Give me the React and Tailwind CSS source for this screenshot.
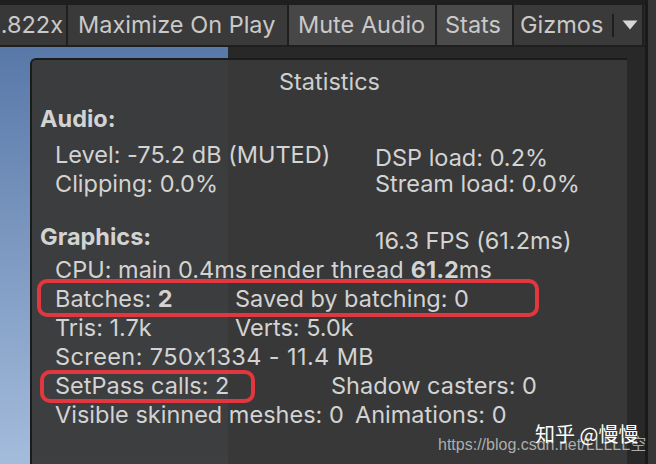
export default function App() {
  const btn = "flex items-center text-[23.5px] text-[#c9c9c9] whitespace-nowrap overflow-hidden";
  return (
    <div className="w-[656px] h-[464px] overflow-hidden flex bg-[#2a2a2a] font-['Inter',sans-serif] [font-feature-settings:'calt'_0] relative">
      <div className="w-[645px] shrink-0 flex flex-col">
        {/* toolbar */}
        <div className="h-[47px] shrink-0 flex gap-[2px] bg-[#1f1f1f] pt-[5px] pb-[2px]">
          <div className={`${btn} w-[66px] justify-end pr-[3px] bg-[#383838]`}>.822x</div>
          <div className={`${btn} w-[219px] pl-[10px] bg-[#3a3a3a]`}>Maximize On Play</div>
          <div className={`${btn} w-[146px] pl-[9px] bg-[#474747]`}>Mute Audio</div>
          <div className={`${btn} w-[75px] pl-[8px] bg-[#4b4b4b]`}>Stats</div>
          <div className={`${btn} w-[128px] pl-[6px] bg-[#3a3a3a]`}>
            <span>Gizmos</span>
            <span className="ml-[9px] w-[2px] h-[23px] shrink-0 bg-[#1e1e1e]"></span>
            <svg className="ml-[8px] shrink-0" width="16" height="10" viewBox="0 0 16 10">
              <path d="M0.5 0.5 L15.5 0.5 L8 9.5 Z" fill="#d6d6d6" />
            </svg>
          </div>
          <div className="flex-1 bg-[#2a2a2a]"></div>
        </div>
        {/* game view */}
        <div className="flex-1 flex flex-col min-h-0 bg-[image:linear-gradient(to_right,transparent_228px,#282828_228px),linear-gradient(to_bottom,#5878a8,#a4bcdc)]">
          <div className="ml-[30px] mt-[11px] w-[597px] flex-1 border-l-2 border-t-2 border-[#1b1b1b] rounded-tl-[6px] bg-[#393939]/96 text-[23.5px] leading-[29px] text-[#d3d3d3]">
            <div className="pt-[7px] text-center text-[#cfcfcf]">Statistics</div>
            <div className="pl-[8px]">
              <div className="mt-[8px] font-bold">Audio:</div>
              <div className="mt-[7px] pl-[15px] flex">
                <div className="w-[320px] shrink-0 whitespace-nowrap">
                  <div>Level: -75.2 dB (MUTED)</div>
                  <div>Clipping: 0.0%</div>
                </div>
                <div className="pt-[5px] leading-[26px] whitespace-nowrap">
                  <div>DSP load: 0.2%</div>
                  <div>Stream load: 0.0%</div>
                </div>
              </div>
              <div className="mt-[24px] flex items-start">
                <div className="w-[335px] shrink-0 font-bold">Graphics:</div>
                <div className="mt-[4px] whitespace-nowrap">16.3 FPS (61.2ms)</div>
              </div>
              <div className="pl-[15px]">
                <div className="whitespace-nowrap">
                  CPU: main 0.4ms<span className="ml-[3px] tracking-[0.2px]">render thread </span><b>61.2</b>ms
                </div>
                <div className="relative flex whitespace-nowrap">
                  <span className="w-[180px] shrink-0">Batches: <b>2</b></span>
                  <span>Saved by batching: 0</span>
                  <div className="absolute left-[-18px] top-[-5px] w-[502px] h-[38px] border-[4px] border-[#e2373f] rounded-[10px]"></div>
                </div>
                <div className="flex whitespace-nowrap">
                  <span className="w-[180px] shrink-0">Tris: 1.7k</span>
                  <span>Verts: 5.0k</span>
                </div>
                <div className="whitespace-nowrap tracking-[0.4px]">Screen: 750x1334 - 11.4 MB</div>
                <div className="relative flex whitespace-nowrap">
                  <span className="w-[276px] shrink-0">SetPass calls: 2</span>
                  <span>Shadow casters: 0</span>
                  <div className="absolute left-[-15px] top-[-1px] w-[215px] h-[33px] border-[4px] border-[#e2373f] rounded-[10px]"></div>
                </div>
                <div className="flex whitespace-nowrap">
                  <span className="w-[300px] shrink-0">Visible skinned meshes: 0</span>
                  <span>Animations: 0</span>
                </div>
              </div>
            </div>
          </div>
        </div>
      </div>
      <div className="w-[3px] shrink-0 bg-[#1a1a1a]"></div>
      <div className="flex-1 bg-[#363636]"></div>
      {/* watermark */}
      <div className="absolute left-[438px] top-[436px] text-[16px] leading-[18px] text-[#c4c4c4]/85 font-['Liberation_Sans','Noto_Sans_CJK_SC',sans-serif] whitespace-nowrap">
        https://blog.csdn.net/LLLLL空
      </div>
      <div className="absolute left-[535px] top-[423px] text-[20px] leading-[22px] text-white font-['Noto_Sans_CJK_SC',sans-serif] whitespace-nowrap">
        知乎 @慢慢
      </div>
    </div>
  );
}
